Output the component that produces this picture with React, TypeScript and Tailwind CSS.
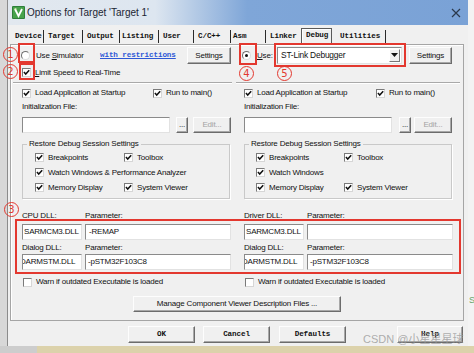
import React from "react";

const sans = "font-['Liberation_Sans',Arial,sans-serif] text-[8px] tracking-[-0.2px] text-[#111]";
const mono = "font-['Liberation_Mono','Courier_New',monospace] font-bold text-[7.6px] tracking-[-0.1px] text-[#111]";

function Box({ checked = true }: { checked?: boolean }) {
  return (
    <span className="flex w-[9px] h-[9px] shrink-0 items-center justify-center border border-t-[#7a7a7a] border-l-[#7a7a7a] border-r-[#d6d6d6] border-b-[#d6d6d6] bg-white">
      {checked && (
        <svg width="7" height="7" viewBox="0 0 7 7">
          <path d="M0.9 3.1 L2.7 5.1 L6.2 1.2" fill="none" stroke="#111" strokeWidth="1.5" />
        </svg>
      )}
    </span>
  );
}

function Radio({ on = false }: { on?: boolean }) {
  return (
    <span className="flex w-[9px] h-[9px] shrink-0 items-center justify-center rounded-full border border-t-[#6f6f6f] border-l-[#6f6f6f] border-r-[#dcdcdc] border-b-[#dcdcdc] bg-white">
      {on && <span className="w-[3px] h-[3px] rounded-full bg-[#111]" />}
    </span>
  );
}

function Check({ label, w = "", checked = true }: { label: React.ReactNode; w?: string; checked?: boolean }) {
  return (
    <div className={`flex items-center ${w}`}>
      <Box checked={checked} />
      <span className="ml-[4px] whitespace-nowrap">{label}</span>
    </div>
  );
}

function Btn({ children, className = "", disabled = false, font = sans }: { children: React.ReactNode; className?: string; disabled?: boolean; font?: string }) {
  return (
    <div
      className={`flex items-center justify-center bg-[#f0f0f0] border border-t-[#fdfdfd] border-l-[#fdfdfd] border-r-[#6c6c6c] border-b-[#6c6c6c] shadow-[inset_-1px_-1px_0_#a8a8a8] whitespace-nowrap ${font} ${disabled ? "!text-[#a3a3a3]" : ""} ${className}`}
    >
      {children}
    </div>
  );
}

function Field({ children, className = "" }: { children?: React.ReactNode; className?: string }) {
  return (
    <div className={`flex items-center h-[16px] bg-white border border-t-[#8a8a8a] border-l-[#8a8a8a] border-r-[#e2e2e2] border-b-[#e2e2e2] overflow-hidden whitespace-nowrap ${className}`}>
      {children}
    </div>
  );
}

function Mark({ n, className }: { n: string; className: string }) {
  return (
    <div className={`absolute flex items-center justify-center w-[15px] h-[15px] rounded-full border-[1.5px] border-[#e3382f] text-[#e3382f] font-['DejaVu_Sans',sans-serif] text-[10px] leading-none ${className}`}>
      {n}
    </div>
  );
}

function Group({ children, className = "" }: { children: React.ReactNode; className?: string }) {
  return (
    <fieldset className={`border border-[#c9c9c9] shadow-[1px_1px_0_#fff] pb-[3px] ${className}`}>
      <legend className="ml-[4px] px-[2px] leading-[10px]">Restore Debug Session Settings</legend>
      {children}
    </fieldset>
  );
}

function DllRows({ a, b, p1, p2, first }: { a: string; b: string; p1: string; p2: string; first: string }) {
  return (
    <>
      <div className="flex items-center h-[12px] mt-[11px] ml-[11px]">
        <span className="w-[63px]">{first}</span>
        <span>Parameter:</span>
      </div>
      <div className="flex mt-[2px] ml-[11px]">
        <Field className="w-[60px] pl-[1px]">{a}</Field>
        <Field className="w-[146px] ml-[3px] pl-[3px]">{p1}</Field>
      </div>
      <div className="flex items-center h-[12px] mt-[2px] ml-[11px]">
        <span className="w-[63px]">Dialog DLL:</span>
        <span>Parameter:</span>
      </div>
      <div className="flex ml-[11px]">
        <Field className="w-[60px]">
          <span className="-ml-[3px]">{b}</span>
        </Field>
        <Field className="w-[146px] ml-[3px] pl-[2px]">{p2}</Field>
      </div>
      <div className="flex items-center h-[12px] mt-[6px] ml-[12px]">
        <Check checked={false} label="Warn if outdated Executable is loaded" />
      </div>
    </>
  );
}

function Tab({ label, className }: { label: string; className: string }) {
  return <div className={`flex items-center h-[13px] border-r border-[#2a2a2a] ${className}`}>{label}</div>;
}

export default function App() {
  return (
    <div className="relative w-[474px] h-[353px] overflow-hidden flex flex-col bg-[#e6e6e6]">
      <div className="flex h-[346px]">
        <div className="w-[7px] bg-[#d8d8d8]" />
        <div className={`w-[461px] flex flex-col bg-[#f0f0f0] border-l border-[#8c8c8c] ${sans}`}>
          {/* title bar */}
          <div className="flex items-center h-[25px] bg-[linear-gradient(90deg,#e2e8ef_0%,#dde6f0_32%,#7fa6d8_52%,#7aa2d6_100%)]">
            <svg width="13" height="13" viewBox="0 0 13 13" className="ml-[4px]">
              <rect x="0" y="0" width="13" height="13" rx="1" fill="#2f7f3a" />
              <rect x="1" y="1" width="11" height="11" fill="#47a24b" />
              <path d="M3 3 L6.5 10 L10 3" fill="none" stroke="#fff" strokeWidth="1.8" />
              <path d="M2.5 3 L4.5 3" stroke="#e9f2c0" strokeWidth="1.2" />
            </svg>
            <span className="ml-[2px] font-['Liberation_Sans',Arial,sans-serif] text-[10px] tracking-normal text-[#1b2533]">
              Options for Target 'Target 1'
            </span>
            <svg width="10" height="10" viewBox="0 0 10 10" className="ml-auto mr-[7px]">
              <path d="M1 1 L9 9 M9 1 L1 9" stroke="#2b394c" strokeWidth="1.2" />
            </svg>
          </div>

          {/* tabs */}
          <div className={`flex items-end h-[19px] pl-[4px] pb-[1px] ${mono}`}>
            <Tab label="Device" className="w-[32px] pl-[3px]" />
            <Tab label="Target" className="w-[39px] pl-[4px]" />
            <Tab label="Output" className="w-[37px] pl-[4px]" />
            <Tab label="Listing" className="w-[39px] pl-[2px]" />
            <Tab label="User" className="w-[35px] pl-[4px]" />
            <Tab label="C/C++" className="w-[37px] pl-[4px]" />
            <Tab label="Asm" className="w-[35px] pl-[2px]" />
            <div className="flex items-center h-[13px] w-[35px] pl-[4px]">Linker</div>
            <div className="flex items-center h-[15px] w-[31px] pl-[4px] border border-[#5a5a5a] border-b-0 shadow-[inset_1px_1px_0_#fff]">Debug</div>
            <Tab label="Utilities" className="w-[54px] pl-[8px]" />
          </div>

          {/* tab panel */}
          <div className="ml-[2px] w-[454px] h-[277px] flex flex-col border border-[#a5a5a5] shadow-[inset_1px_1px_0_#fff]">
            <div className="flex">
              {/* left column */}
              <div className="w-[222px] flex flex-col">
                <div className="flex items-center h-[21px]">
                  <span className="ml-[10px]">
                    <Radio />
                  </span>
                  <span className="ml-[6px] w-[64px]">
                    Use <span className="underline">S</span>imulator
                  </span>
                  <span className={`${mono} !text-[#2e58d6] underline w-[87px]`}>with restrictions</span>
                  <Btn className="w-[44px] h-[17px]">Settings</Btn>
                </div>
                <div className="flex items-center h-[13px] ml-[11px]">
                  <Check
                    label={
                      <>
                        <span className="underline">L</span>imit Speed to Real-Time
                      </>
                    }
                  />
                </div>
                <div className="mt-[3px] ml-[2px] mr-[1px] border-t border-[#a9a9a9] border-b border-b-white" />
                <div className="flex items-center h-[12px] mt-[3px] ml-[11px]">
                  <Check w="w-[131px]" label="Load Application at Startup" />
                  <Check label="Run to main()" />
                </div>
                <div className="flex items-center h-[12px] mt-[2px] ml-[11px]">Initialization File:</div>
                <div className="flex mt-[4px] ml-[11px]">
                  <Field className="w-[148px]" />
                  <Btn className="w-[12px] h-[16px] ml-[6px]">...</Btn>
                  <Btn className="w-[38px] h-[16px] ml-[5px]" disabled>
                    Edit...
                  </Btn>
                </div>
                <Group className="mt-[6px] ml-[11px] w-[208px]">
                  <div className="flex items-center h-[15px] ml-[12px] mt-[1px]">
                    <Check w="w-[89px]" label="Breakpoints" />
                    <Check label="Toolbox" />
                  </div>
                  <div className="flex items-center h-[15px] ml-[12px]">
                    <Check label="Watch Windows & Performance Analyzer" />
                  </div>
                  <div className="flex items-center h-[15px] ml-[12px]">
                    <Check w="w-[89px]" label="Memory Display" />
                    <Check label="System Viewer" />
                  </div>
                </Group>
                <DllRows first="CPU DLL:" a="SARMCM3.DLL" b="DARMSTM.DLL" p1="-REMAP" p2="-pSTM32F103C8" />
              </div>

              {/* right column */}
              <div className="w-[230px] flex flex-col">
                <div className="flex items-center h-[21px]">
                  <span className="ml-[9px]">
                    <Radio on />
                  </span>
                  <span className="ml-[6px] w-[20px]">
                    <span className="underline">U</span>se:
                  </span>
                  <div className="flex items-center w-[125px] h-[17px] bg-white border border-t-[#8a8a8a] border-l-[#8a8a8a] border-r-[#e2e2e2] border-b-[#e2e2e2]">
                    <span className="ml-[3px] text-[8.4px]">ST-Link Debugger</span>
                    <div className="ml-auto mr-[1px] w-[11px] h-[13px] flex flex-col items-center justify-center bg-[#f0f0f0] border border-t-white border-l-white border-r-[#777] border-b-[#777]">
                      <svg width="7" height="5" viewBox="0 0 7 5">
                        <path d="M0 0 H7 L3.5 4 Z" fill="#111" />
                      </svg>
                    </div>
                  </div>
                  <Btn className="w-[43px] h-[17px] ml-[7px]">Settings</Btn>
                </div>
                <div className="h-[13px]" />
                <div className="mt-[3px] ml-[3px] mr-[3px] border-t border-[#a9a9a9] border-b border-b-white" />
                <div className="flex items-center h-[12px] mt-[3px] ml-[11px]">
                  <Check w="w-[132px]" label="Load Application at Startup" />
                  <Check label="Run to main()" />
                </div>
                <div className="flex items-center h-[12px] mt-[2px] ml-[11px]">Initialization File:</div>
                <div className="flex mt-[4px] ml-[11px]">
                  <Field className="w-[148px]" />
                  <Btn className="w-[12px] h-[16px] ml-[7px]">...</Btn>
                  <Btn className="w-[38px] h-[16px] ml-[3px]" disabled>
                    Edit...
                  </Btn>
                </div>
                <Group className="mt-[6px] ml-[11px] w-[208px]">
                  <div className="flex items-center h-[15px] ml-[11px] mt-[1px]">
                    <Check w="w-[88px]" label="Breakpoints" />
                    <Check label="Toolbox" />
                  </div>
                  <div className="flex items-center h-[15px] ml-[11px]">
                    <Check label="Watch Windows" />
                  </div>
                  <div className="flex items-center h-[15px] ml-[11px]">
                    <Check w="w-[88px]" label="Memory Display" />
                    <Check label="System Viewer" />
                  </div>
                </Group>
                <DllRows first="Driver DLL:" a="SARMCM3.DLL" b="DARMSTM.DLL" p1="" p2="-pSTM32F103C8" />
              </div>
            </div>
            <div className="flex justify-center mt-[8px]">
              <Btn className="w-[208px] h-[16px]">Manage Component Viewer Description Files ...</Btn>
            </div>
          </div>

          {/* bottom buttons */}
          <div className="flex mt-[5px] ml-[120px]">
            <Btn font={mono} className="w-[67px] h-[17px] border-[#3a3a3a]">OK</Btn>
            <Btn font={mono} className="w-[67px] h-[17px] ml-[8px]">Cancel</Btn>
            <Btn font={mono} className="w-[67px] h-[17px] ml-[9px]">Defaults</Btn>
            <Btn font={mono} className="w-[66px] h-[17px] ml-[51px]">Help</Btn>
          </div>
        </div>
        <div className="w-[6px] bg-[#f3f3f3] flex flex-col">
          <span className="mt-[296px] ml-[1px] font-['Liberation_Sans',sans-serif] text-[9px] text-[#6aa56a] leading-none">S</span>
        </div>
      </div>
      <div className="flex h-[7px]">
        <div className="w-[37px] bg-[#cdcdcd]" />
        <div className="flex-1 bg-[#dcd2ab]" />
      </div>

      {/* annotations */}
      <div className="absolute left-[18px] top-[43px] w-[17px] h-[20px] border-2 border-[#e3382f]" />
      <div className="absolute left-[19px] top-[63px] w-[16px] h-[17px] border-2 border-[#e3382f]" />
      <div className="absolute left-[15px] top-[219px] w-[446px] h-[55px] border-2 border-[#e3382f]" />
      <div className="absolute left-[239px] top-[43px] w-[18px] h-[22px] border-2 border-[#e3382f]" />
      <div className="absolute left-[274px] top-[43px] w-[132px] h-[24px] border-2 border-[#e3382f]" />
      <Mark n="1" className="left-[3px] top-[47px]" />
      <Mark n="2" className="left-[3px] top-[64px]" />
      <Mark n="3" className="left-[4px] top-[202px]" />
      <Mark n="4" className="left-[239px] top-[66px]" />
      <Mark n="5" className="left-[277px] top-[66px]" />

      <div className="absolute left-[363px] top-[331px] font-['Liberation_Sans','Noto_Sans_CJK_SC',sans-serif] text-[11px] text-[#9a9a9a]/80 whitespace-nowrap">
        CSDN @小星星星球
      </div>
    </div>
  );
}
